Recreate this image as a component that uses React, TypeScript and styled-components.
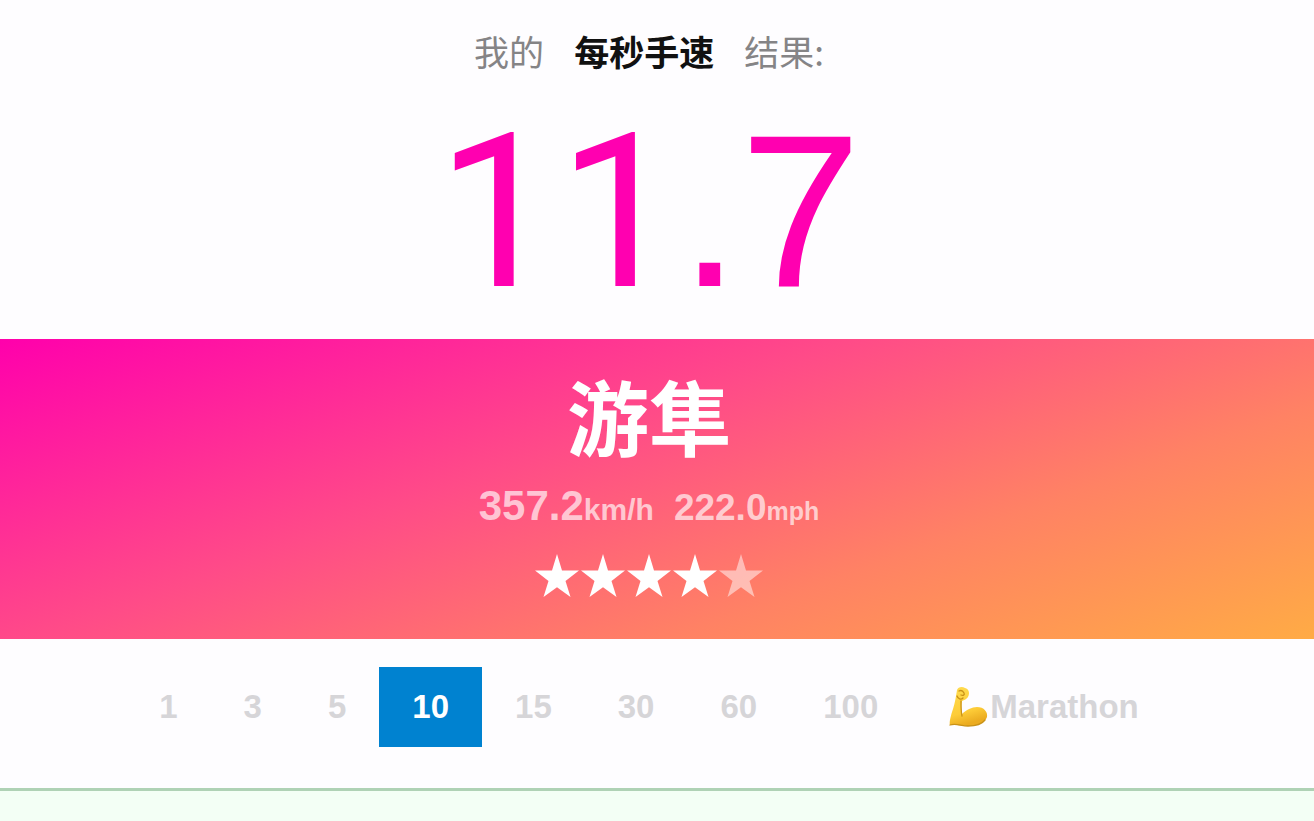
import { useState } from "react";
import styled, { createGlobalStyle } from "styled-components";

const GlobalStyle = createGlobalStyle`
  * { box-sizing: border-box; }
  html, body, #root { min-height: 100vh; }
  body {
    margin: 0;
    background: #fefdff;
    font-family: "Liberation Sans", "Noto Sans CJK SC", sans-serif;
  }
`;

const Page = styled.main`
  display: flex;
  flex-direction: column;
  min-height: 100vh;
`;

const Result = styled.header`
  display: flex;
  flex-direction: column;
  align-items: center;
  gap: 12px;
  padding: 27px 16px 0 0;
`;

const Caption = styled.h1`
  display: flex;
  gap: 30px;
  margin: 0;
  font-family: "Noto Sans CJK SC", sans-serif;
  font-size: 35px;
  line-height: 48px;
  font-weight: 400;
  color: #858486;
`;

const Metric = styled.strong`
  font-weight: 700;
  color: #111;
`;

const Score = styled.output`
  font-family: Roboto, "Liberation Sans", sans-serif;
  font-size: 216px;
  line-height: 252px;
  font-kerning: none;
  color: #ff00b0;
`;

const Fraction = styled.span`
  font-family: "Liberation Sans", sans-serif;
  font-size: 218px;
  line-height: 1;
`;

const Banner = styled.section`
  display: flex;
  flex-direction: column;
  align-items: center;
  height: 300px;
  padding: 20px 16px 0 0;
  color: #fff;
  background: linear-gradient(160deg, #ff00ac 0%, #ff4b88 40%, #ff8264 70%, #ffab45 100%);
`;

const Animal = styled.h2`
  margin: 0 0 3px;
  font-family: "Noto Sans CJK SC", sans-serif;
  font-size: 82px;
  line-height: 112px;
  font-weight: 700;
`;

const Speeds = styled.p`
  display: flex;
  align-items: baseline;
  gap: 20px;
  margin: 0;
  line-height: 64px;
  font-weight: 700;
  color: rgba(255, 255, 255, 0.66);
`;

const Speed = styled.span<{ $size: number }>`
  font-size: ${(p) => p.$size}px;
`;

const Unit = styled.span<{ $size: number }>`
  font-size: ${(p) => p.$size}px;
`;

const Stars = styled.div`
  display: flex;
  gap: 2px;
  padding-top: 11px;
`;

const Star = styled.svg<{ $on: boolean }>`
  width: 44px;
  height: 44px;
  fill: #fff;
  opacity: ${(p) => (p.$on ? 1 : 0.5)};
`;

const Tabs = styled.nav`
  display: flex;
  justify-content: center;
  padding: 28px 16px 41px 0;
`;

const Tab = styled.button<{ $active: boolean }>`
  display: flex;
  align-items: center;
  height: 80px;
  padding: 0 33px;
  border: 0;
  background: ${(p) => (p.$active ? "#0082d0" : "transparent")};
  color: ${(p) => (p.$active ? "#fff" : "#d6d5d8")};
  font-family: inherit;
  font-size: 33px;
  font-weight: 700;
  cursor: pointer;
`;

const Biceps = styled.svg`
  width: 46px;
  height: 44px;
`;

const Panel = styled.section`
  flex: 1;
  min-height: 33px;
  border-top: 3px solid #afd2b5;
  background: #f3fff5;
`;

const durations = ["1", "3", "5", "10", "15", "30", "60", "100", "Marathon"];

function Arm() {
  return (
    <Biceps viewBox="0 0 46 44" aria-hidden="true">
      <defs>
        <linearGradient id="skin" x1="0" y1="0" x2="0.3" y2="1">
          <stop offset="0" stopColor="#ffdc50" />
          <stop offset="0.7" stopColor="#fdcc38" />
          <stop offset="1" stopColor="#ebab20" />
        </linearGradient>
      </defs>
      <path
        d="M13 5 C14 2 18 1 21 3 C25 4 26 8 24 12 C23 14 20 15 18 16 C17 21 17 25 18 29 C22 25 28 22 33 22 C40 22 44 27 43 32 C41 38 34 41 24 41 C17 41 12 39 6 40 C5 37 7 30 9 24 C11 18 12 11 13 5 Z"
        fill="url(#skin)"
      />
      <path
        d="M13 11 C14 14 17 15 19 13 M15 6 C17 5 19 6 20 8 C21 10 19 11 17 10 M17 16 C17 22 17 27 18 31 M6 40 C12 38 17 41 24 41 C31 41 38 39 41 35"
        fill="none"
        stroke="#c99218"
        strokeWidth="1.3"
        strokeLinecap="round"
      />
    </Biceps>
  );
}

export default function App() {
  const [active, setActive] = useState("10");
  return (
    <Page lang="zh-CN">
      <GlobalStyle />
      <Result>
        <Caption>
          <span>我的</span>
          <Metric>每秒手速</Metric>
          <span>结果:</span>
        </Caption>
        <Score>11<Fraction>.7</Fraction></Score>
      </Result>
      <Banner>
        <Animal>游隼</Animal>
        <Speeds>
          <Speed $size={42}>357.2<Unit $size={30}>km/h</Unit></Speed>
          <Speed $size={37}>222.0<Unit $size={25}>mph</Unit></Speed>
        </Speeds>
        <Stars role="img" aria-label="4 / 5">
          {[1, 2, 3, 4, 5].map((n) => (
            <Star key={n} $on={n <= 4} viewBox="0 0 44 44">
              <path d="M22 0 L27 16.5 H44 L30.5 27 L35.5 43 L22 33.2 L8.5 43 L13.5 27 L0 16.5 H17 Z" />
            </Star>
          ))}
        </Stars>
      </Banner>
      <Tabs>
        {durations.map((d) => (
          <Tab key={d} type="button" $active={d === active} aria-pressed={d === active} onClick={() => setActive(d)}>
            {d === "Marathon" && <Arm />}
            {d}
          </Tab>
        ))}
      </Tabs>
      <Panel />
    </Page>
  );
}
